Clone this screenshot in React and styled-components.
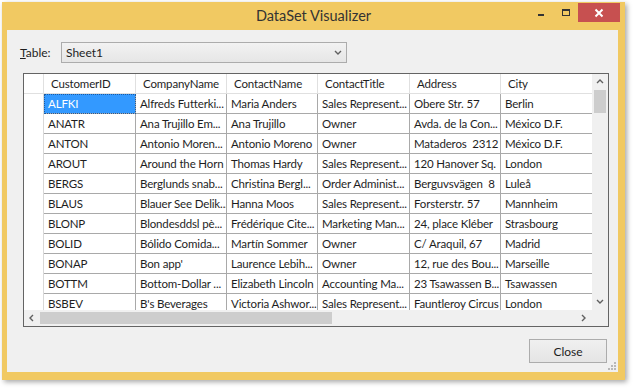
import styled, { createGlobalStyle } from "styled-components";

const GlobalStyle = createGlobalStyle`
  body {
    margin: 0;
    background: #ffffff;
    font-family: Lato, "Open Sans", sans-serif;
  }
`;

const columns = [
  { name: "CustomerID", width: 92 },
  { name: "CompanyName", width: 91 },
  { name: "ContactName", width: 91 },
  { name: "ContactTitle", width: 92 },
  { name: "Address", width: 91 },
  { name: "City", width: 92 },
];

const rows = [
  ["ALFKI", "Alfreds Futterki...", "Maria Anders", "Sales Represent...", "Obere Str. 57", "Berlin"],
  ["ANATR", "Ana Trujillo Em...", "Ana Trujillo", "Owner", "Avda. de la Con...", "México D.F."],
  ["ANTON", "Antonio Moren...", "Antonio Moreno", "Owner", "Mataderos  2312", "México D.F."],
  ["AROUT", "Around the Horn", "Thomas Hardy", "Sales Represent...", "120 Hanover Sq.", "London"],
  ["BERGS", "Berglunds snab...", "Christina Bergl...", "Order Administ...", "Berguvsvägen  8", "Luleå"],
  ["BLAUS", "Blauer See Delik...", "Hanna Moos", "Sales Represent...", "Forsterstr. 57", "Mannheim"],
  ["BLONP", "Blondesddsl pè...", "Frédérique Cite...", "Marketing Man...", "24, place Kléber", "Strasbourg"],
  ["BOLID", "Bólido Comida...", "Martín Sommer", "Owner", "C/ Araquil, 67", "Madrid"],
  ["BONAP", "Bon app'", "Laurence Lebih...", "Owner", "12, rue des Bou...", "Marseille"],
  ["BOTTM", "Bottom-Dollar ...", "Elizabeth Lincoln", "Accounting Ma...", "23 Tsawassen B...", "Tsawassen"],
  ["BSBEV", "B's Beverages", "Victoria Ashwor...", "Sales Represent...", "Fauntleroy Circus", "London"],
];

const Chevron = ({ dir }) => {
  const points = {
    up: "1,5 4,2 7,5",
    down: "1,2 4,5 7,2",
    left: "5,1 2,4 5,7",
    right: "2,1 5,4 2,7",
  }[dir];
  return (
    <svg width="8" height="8" viewBox="0 0 8 8">
      <polyline points={points} fill="none" stroke="#606060" strokeWidth="1.4" />
    </svg>
  );
};

export default function App() {
  return (
    <Page>
      <GlobalStyle />
      <Window>
        <TitleBar>
          <span />
          <Title>DataSet Visualizer</Title>
          <Controls>
            <CtlButton>
              <MinGlyph />
            </CtlButton>
            <CtlButton>
              <MaxGlyph />
            </CtlButton>
            <CloseCtl>
              <svg width="10" height="10" viewBox="0 0 10 10">
                <path d="M1.5 1.5 L8.5 8.5 M8.5 1.5 L1.5 8.5" stroke="#fff" strokeWidth="2" />
              </svg>
            </CloseCtl>
          </Controls>
        </TitleBar>

        <Client>
          <TableRow>
            <Label>
              <u>T</u>able:
            </Label>
            <Combo>
              <span>Sheet1</span>
              <Chevron dir="down" />
            </Combo>
          </TableRow>

          <Grid>
            <Viewport>
              <HeaderRow>
                <RowHeaderCell $header />
                {columns.map((col) => (
                  <HeaderCell key={col.name} $w={col.width}>
                    {col.name}
                  </HeaderCell>
                ))}
              </HeaderRow>
              {rows.map((row, r) => (
                <BodyRow key={row[0]}>
                  <RowHeaderCell />
                  {row.map((value, c) => (
                    <Cell key={c} $w={columns[c].width} $selected={r === 0 && c === 0}>
                      {value}
                    </Cell>
                  ))}
                </BodyRow>
              ))}
            </Viewport>

            <VScroll>
              <ArrowBox>
                <Chevron dir="up" />
              </ArrowBox>
              <VThumb />
              <Track />
              <ArrowBox>
                <Chevron dir="down" />
              </ArrowBox>
            </VScroll>

            <HScroll>
              <ArrowBox>
                <Chevron dir="left" />
              </ArrowBox>
              <HThumb />
              <Track />
              <ArrowBox>
                <Chevron dir="right" />
              </ArrowBox>
            </HScroll>

            <Corner />
          </Grid>

          <Footer>
            <Button>Close</Button>
          </Footer>

          <Grip>
            <svg width="8" height="8" viewBox="0 0 8 8">
              <rect x="6" y="0" width="2" height="2" fill="#b8b8b8" />
              <rect x="3" y="3" width="2" height="2" fill="#b8b8b8" />
              <rect x="6" y="3" width="2" height="2" fill="#b8b8b8" />
              <rect x="0" y="6" width="2" height="2" fill="#b8b8b8" />
              <rect x="3" y="6" width="2" height="2" fill="#b8b8b8" />
              <rect x="6" y="6" width="2" height="2" fill="#b8b8b8" />
            </svg>
          </Grip>
        </Client>
      </Window>
    </Page>
  );
}

const Page = styled.div`
  padding: 2px 0 0 2px;
  height: 389px;
  box-sizing: border-box;
  overflow: hidden;
`;

const Window = styled.div`
  width: 623px;
  height: 378px;
  display: flex;
  flex-direction: column;
  background: #f1c962;
  box-shadow: 2px 2px 5px rgba(0, 0, 0, 0.35);
`;

const TitleBar = styled.div`
  height: 28px;
  display: grid;
  grid-template-columns: 97px 1fr 97px;
  align-items: start;
`;

const Title = styled.div`
  font-size: 14.5px;
  line-height: 28px;
  color: #333333;
  text-align: center;
`;

const Controls = styled.div`
  display: flex;
  justify-content: flex-end;
  padding: 1px 5px 0 0;
`;

const CtlButton = styled.div`
  width: 25px;
  height: 19px;
  display: flex;
  align-items: center;
  justify-content: center;
`;

const MinGlyph = styled.div`
  width: 6px;
  height: 2px;
  margin-top: 5px;
  background: #333333;
`;

const MaxGlyph = styled.div`
  width: 6px;
  height: 4px;
  border: 1px solid #333333;
  border-top-width: 2px;
`;

const CloseCtl = styled.div`
  width: 42px;
  height: 19px;
  background: #c75050;
  display: flex;
  align-items: center;
  justify-content: center;
`;

const Client = styled.div`
  flex: 1;
  margin: 0 7px 8px 5px;
  background: #f0f0f0;
  padding: 12px 0 0 13px;
  display: flex;
  flex-direction: column;
  position: relative;
`;

const TableRow = styled.div`
  display: flex;
  align-items: center;
  height: 21px;
`;

const Label = styled.div`
  width: 41px;
  font-size: 12px;
  color: #1e1e1e;
`;

const Combo = styled.div`
  width: 286px;
  height: 21px;
  box-sizing: border-box;
  border: 1px solid #acacac;
  background: linear-gradient(#f2f2f2, #e6e6e6);
  display: flex;
  align-items: center;
  justify-content: space-between;
  padding: 0 4px 0 4px;
  font-size: 12px;
  color: #1e1e1e;
`;

const Grid = styled.div`
  margin: 10px 0 0 3px;
  width: 586px;
  height: 254px;
  box-sizing: border-box;
  border: 1px solid #646464;
  background: #ffffff;
  display: grid;
  grid-template-columns: 1fr 16px;
  grid-template-rows: 1fr 16px;
`;

const Viewport = styled.div`
  overflow: hidden;
  font-size: 11.5px;
  letter-spacing: -0.15px;
  color: #1e1e1e;
`;

const HeaderRow = styled.div`
  display: flex;
  height: 20px;
  border-bottom: 1px solid #e0e0e0;
  box-sizing: border-box;
`;

const BodyRow = styled.div`
  display: flex;
  height: 20px;
`;

const RowHeaderCell = styled.div`
  flex: none;
  width: 20px;
  box-sizing: border-box;
  border-right: 1px solid ${(p) => (p.$header ? "#e0e0e0" : "#d8d8d8")};
  background: #ffffff;
`;

const HeaderCell = styled.div`
  flex: none;
  width: ${(p) => p.$w}px;
  box-sizing: border-box;
  border-right: 1px solid #e0e0e0;
  padding-left: 7px;
  line-height: 19px;
  white-space: nowrap;
  overflow: hidden;
`;

const Cell = styled.div`
  flex: none;
  width: ${(p) => p.$w}px;
  box-sizing: border-box;
  border-right: 1px solid #a9a9a9;
  border-bottom: 1px solid #a9a9a9;
  padding-left: 4px;
  line-height: 19px;
  white-space: pre;
  overflow: hidden;
  background: ${(p) => (p.$selected ? "#3399ff" : "#ffffff")};
  color: ${(p) => (p.$selected ? "#ffffff" : "inherit")};
  outline: ${(p) => (p.$selected ? "1px dotted #1c5aa0" : "none")};
  outline-offset: -1px;
`;

const VScroll = styled.div`
  display: flex;
  flex-direction: column;
  background: #f0f0f0;
`;

const HScroll = styled.div`
  display: flex;
  background: #f0f0f0;
`;

const ArrowBox = styled.div`
  flex: none;
  width: 16px;
  height: 16px;
  display: flex;
  align-items: center;
  justify-content: center;
`;

const Track = styled.div`
  flex: 1;
`;

const VThumb = styled.div`
  flex: none;
  height: 23px;
  margin: 0 2px;
  background: #cdcdcd;
`;

const HThumb = styled.div`
  flex: none;
  width: 292px;
  margin: 2px 0;
  background: #cdcdcd;
`;

const Corner = styled.div`
  background: #f0f0f0;
`;

const Footer = styled.div`
  display: flex;
  justify-content: flex-end;
  margin-top: 12px;
  padding-right: 11px;
`;

const Button = styled.div`
  width: 78px;
  height: 24px;
  box-sizing: border-box;
  border: 1px solid #acacac;
  background: linear-gradient(#f0f0f0, #e5e5e5);
  display: flex;
  align-items: center;
  justify-content: center;
  font-size: 12px;
  color: #1e1e1e;
`;

const Grip = styled.div`
  position: absolute;
  right: 2px;
  bottom: 2px;
  line-height: 0;
`;
